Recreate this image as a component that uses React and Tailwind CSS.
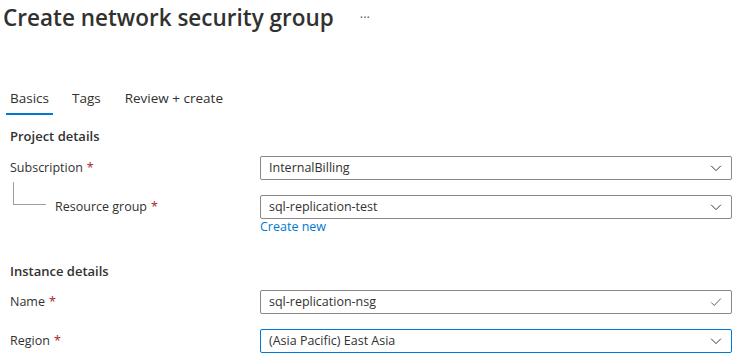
import React from "react";

const Chevron = () => (
  <svg width="14" height="14" viewBox="0 0 16 16" fill="none" stroke="#323130" strokeWidth="1.1">
    <path d="M2.5 5.5 L8 11 L13.5 5.5" />
  </svg>
);

const Check = () => (
  <svg width="14" height="14" viewBox="0 0 16 16" fill="none" stroke="#605e5c" strokeWidth="1.1">
    <path d="M2.5 8.5 L6 12 L13.5 4" />
  </svg>
);

const Label = ({ text, className = "" }) => (
  <div className={`flex items-center text-[12.5px] leading-4 text-[#323130] ${className}`}>
    {text}
    <span className="ml-1 text-[#a4262c]">*</span>
  </div>
);

const Field = ({ value, icon, focused }) => (
  <div
    className={`flex h-6 w-[472px] items-center justify-between rounded-[2px] border pl-2 pr-2 text-[12.5px] leading-4 text-[#323130] ${
      focused ? "border-[#0078d4]" : "border-[#8a8886]"
    }`}
  >
    <span>{value}</span>
    {icon === "check" ? <Check /> : <Chevron />}
  </div>
);

export default function App() {
  return (
    <div className="h-[363px] w-[740px] overflow-hidden bg-white" style={{ fontFamily: '"Open Sans", sans-serif' }}>
      <div className="flex h-8 items-center pl-[3px] pt-1">
        <h1 className="text-[22.5px] font-semibold leading-8 text-[#323130]">Create network security group</h1>
        <span className="ml-[26px] text-[13px] text-[#605e5c]">···</span>
      </div>

      <div className="mt-[56px] flex pl-[6px] text-[13.5px] leading-5 text-[#323130]">
        <div className="border-b-2 border-[#0078d4] px-1 pb-[5px]">Basics</div>
        <div className="ml-[15px] px-1 pb-[5px]">Tags</div>
        <div className="ml-[16px] px-1 pb-[5px]">Review + create</div>
      </div>

      <div className="px-[10px]">
        <div className="mt-[11px] text-[13px] font-semibold leading-5 text-[#323130]">Project details</div>

        <div className="mt-[10px] grid grid-cols-[250px_472px] items-center">
          <Label text="Subscription" />
          <Field value="InternalBilling" />
        </div>

        <div className="mt-[15px] grid grid-cols-[250px_472px] items-start">
          <div className="relative h-6">
            <div className="absolute left-[3px] top-[-13px] h-[23px] w-[33px] border-b border-l border-[#a19f9d]" />
            <Label text="Resource group" className="h-6 pl-[45px]" />
          </div>
          <div>
            <Field value="sql-replication-test" />
            <div className="text-[12.5px] leading-4 text-[#0078d4]">Create new</div>
          </div>
        </div>

        <div className="mt-[26px] text-[13px] font-semibold leading-5 text-[#323130]">Instance details</div>

        <div className="mt-[9px] grid grid-cols-[250px_472px] items-center">
          <Label text="Name" />
          <Field value="sql-replication-nsg" icon="check" />
        </div>

        <div className="mt-[15px] grid grid-cols-[250px_472px] items-center">
          <Label text="Region" />
          <Field value="(Asia Pacific) East Asia" focused />
        </div>
      </div>
    </div>
  );
}
